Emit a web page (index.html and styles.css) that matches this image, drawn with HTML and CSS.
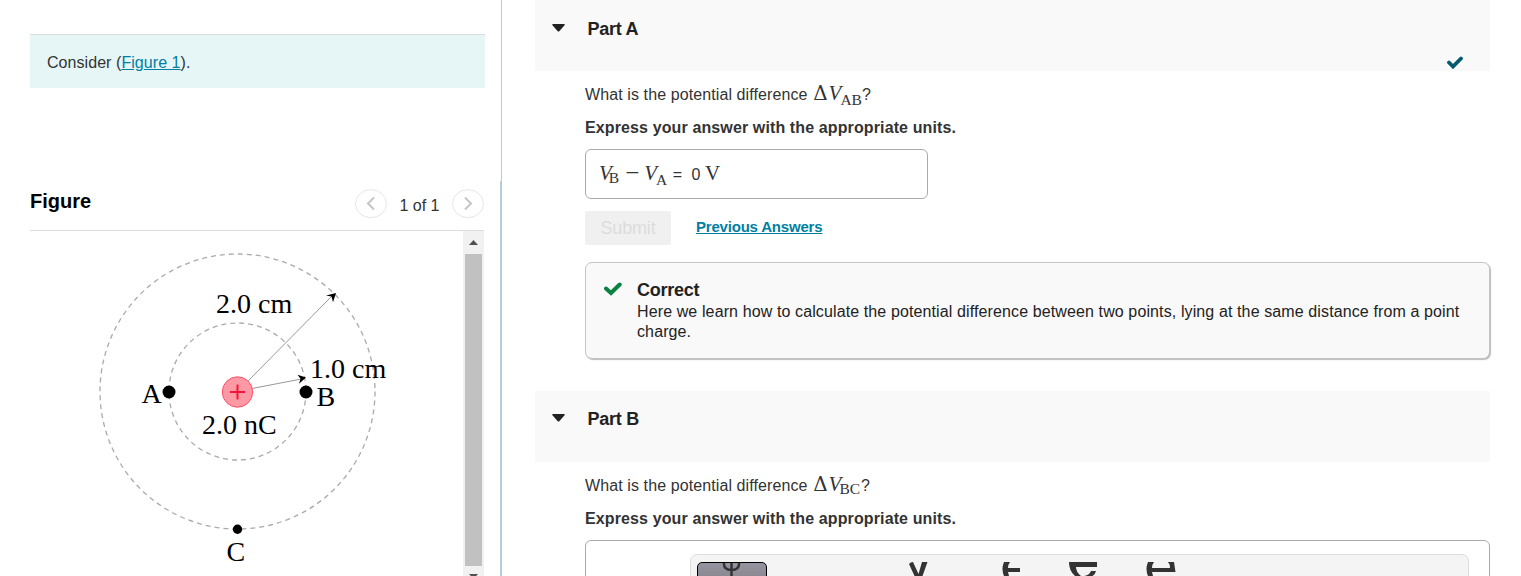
FILE: index.html
```html
<!DOCTYPE html>
<html lang="en">
<head>
  <meta charset="utf-8">
  <meta name="viewport" content="width=device-width" />
  <title>Potential Difference</title>
  <link rel="stylesheet" href="styles.css">
</head>

<body>
  <div class="wrapper">
    <aside class="sidebar">
      <div class="intro">Consider (<a class="link" href="#">Figure 1</a>).</div>

      <div class="figure-panel">
        <header class="figure-header">
          <h2 class="figure-title">Figure</h2>
          <nav class="pager">
            <a class="pager-button" href="#">
              <svg width="32" height="30" viewBox="0 0 32 30"><ellipse cx="16" cy="14.7" rx="15.5" ry="14"/><path d="M19 8.5l-6 6 6 6"/></svg>
            </a>
            <span class="pager-label">1 of 1</span>
            <a class="pager-button" href="#">
              <svg width="32" height="30" viewBox="0 0 32 30"><ellipse cx="16" cy="14.7" rx="15.5" ry="14"/><path d="M13 8.5l6 6-6 6"/></svg>
            </a>
          </nav>
        </header>

        <div class="figure-body">
          <svg class="diagram" width="433" height="345" viewBox="30 231 433 345">
            <!-- equipotential circles -->
            <circle class="orbit" cx="237.5" cy="391.5" r="137.5"/>
            <circle class="orbit" cx="237.5" cy="391.5" r="68.5"/>
            <path class="radius" d="M248 381L334 294M252 388.5L304 378.5"/>
            <path d="M336 293l-10 2.500 5.500 1 1.500 5.800zM306 377.500l-8.500-2.700 3 4-1.500 5z"/>
            <circle class="charge" cx="237.500" cy="392" r="15.200"/>
            <path class="plus" d="M230 392h15M237.500 384.500v15"/>
            <circle cx="169" cy="392" r="6.500"/>
            <circle cx="306" cy="392" r="6.500"/>
            <circle cx="237.500" cy="529.300" r="4.700"/>
            <text x="216" y="313">2.0 cm</text>
            <text x="310" y="377.500">1.0 cm</text>
            <text x="202" y="434">2.0 nC</text>
            <text x="141.500" y="403">A</text>
            <text x="316.500" y="406">B</text>
            <text x="226.500" y="561">C</text>
          </svg>
          <div class="scrollbar">
            <svg class="scroll-arrow" width="21" height="23" viewBox="0 0 21 23"><path d="M6 14l4.500-5 4.500 5z"/></svg>
            <div class="scroll-thumb"></div>
            <svg class="scroll-arrow" width="21" height="10" viewBox="0 0 21 10"><path d="M6 8h9l-4.500 5z"/></svg>
          </div>
        </div>
      </div>
    </aside>

    <div class="divider"></div>

    <main class="main">
      <section class="part">
        <header class="part-header">
          <svg class="caret" width="13" height="8" viewBox="0 0 13 8"><path d="M1 0h11q1.500 0 .5 1.200L7.500 7q-1 1-2 0L.5 1.200Q-.5 0 1 0z"/></svg>
          <h2 class="part-title">Part A</h2>
          <svg class="part-check" width="16" height="13" viewBox="0 0 16 13"><path d="M2 6.500l4 4L14 2.500"/></svg>
        </header>
        <div class="part-body">
          <p class="question">What is the potential difference <span class="math"><span class="delta">Δ</span><i>V</i><sub class="low">AB</sub></span>?</p>
          <p class="instructions">Express your answer with the appropriate units.</p>
          <div class="answer">
            <span class="math"><i>V</i><sub>B</sub><span class="minus">−</span><i>V</i><sub class="low">A</sub></span>
            <span class="equals">=</span>
            <span class="value">0</span>
            <span class="math">V</span>
          </div>
          <div class="actions">
            <span class="button-submit">Submit</span>
            <a class="link previous" href="#">Previous Answers</a>
          </div>
          <div class="feedback">
            <svg class="feedback-check" width="18" height="14" viewBox="0 0 18 14"><path d="M2 6.500l5 4.500L15.700 2.500"/></svg>
            <div class="feedback-text">
              <h3 class="feedback-title">Correct</h3>
              <p>Here we learn how to calculate the potential difference between two points, lying at the same distance from a point<br>charge.</p>
            </div>
          </div>
        </div>
      </section>

      <section class="part part-b">
        <header class="part-header">
          <svg class="caret" width="13" height="8" viewBox="0 0 13 8"><path d="M1 0h11q1.500 0 .5 1.200L7.500 7q-1 1-2 0L.5 1.200Q-.5 0 1 0z"/></svg>
          <h2 class="part-title">Part B</h2>
        </header>
        <div class="part-body">
          <p class="question">What is the potential difference <span class="math"><span class="delta">Δ</span><i>V</i><sub class="wide">BC</sub></span>?</p>
          <p class="instructions">Express your answer with the appropriate units.</p>
          <div class="editor">
            <div class="toolbar">
              <div class="tool-active">
                <svg width="68" height="14" viewBox="0 0 68 14"><path d="M26 0v1q0 6 7.500 6t7.500-6V0M33.500 0v14"/></svg>
              </div>
              <!-- toolbar icons, top edge cut by the panel -->
              <svg class="tools" width="280" height="14" viewBox="900 562 280 14">
                <path d="M909 564q1.500-2 4-2l5.500 12 3.500-12h5.500l-5 14h-8z"/>
                <path d="M1004 562h6q-2 2.500-2 6h12v4h-12l1 4h-5q-3-7 0-14z"/>
                <path d="M1069 562h28v5h-21q0 5 5 9h-6q-6-5-6-14zM1091 571h5q-.5 3-3.500 5h-8q5-1 6.500-5z"/>
                <path d="M1148 562h6q-2 2.500-2 6h18q0-4-2-6h6l1.500 10h-23.500l1 4h-5q-3-7 0-14z"/>
              </svg>
            </div>
          </div>
        </div>
      </section>
    </main>
  </div>
</body>
</html>
```

FILE: styles.css
```css
body {
  margin: 0;
  background-color: white;
  color: #333;
  font-family: "Liberation Sans", Arial, sans-serif;
  font-size: 16px;
  overflow: hidden;
}

p, h2, h3 {
  margin: 0;
}

.wrapper {
  display: flex;
  height: 576px;
  overflow: hidden;
}

.link {
  color: #007fa3;
  text-decoration: underline;
}

/* left column */

.sidebar {
  box-sizing: border-box;
  width: 500px;
  padding: 34px 15px 0 30px;
}

.intro {
  box-sizing: border-box;
  height: 54px;
  padding-left: 17px;
  border-top: 1px solid #dcdcdc;
  background-color: #e6f6f6;
  letter-spacing: .06px;
  line-height: 55px;
}

.figure-panel {
  width: 454px;
  margin-top: 93px;
}

.figure-header {
  box-sizing: border-box;
  display: flex;
  justify-content: space-between;
  height: 50px;
  padding-top: 8px;
  border-bottom: 1px solid #dcdcdc;
}

.figure-title {
  color: black;
  font-size: 20px;
  line-height: 24px;
}

.pager {
  display: flex;
}

.pager-button svg {
  display: block;
  fill: none;
}

.pager-button ellipse {
  stroke: #e6e6e6;
}

.pager-button path {
  stroke: #c4c4c4;
  stroke-width: 2;
}

.pager-label {
  width: 65px;
  line-height: 33px;
  text-align: center;
}

.figure-body {
  display: flex;
  height: 345px;
}

.diagram {
  font-family: "Liberation Serif", "Times New Roman", serif;
  font-size: 28px;
}

.orbit {
  fill: none;
  stroke: #aaa;
  stroke-width: 1.3;
  stroke-dasharray: 5 4;
}

.radius {
  stroke: #999;
}

.charge {
  fill: #ff9aa5;
  stroke: #ff5068;
}

.plus {
  stroke: #f5143c;
  stroke-width: 2;
}

.scrollbar {
  width: 21px;
  background-color: #f1f1f1;
}

.scroll-arrow {
  display: block;
  fill: #505050;
}

.scroll-thumb {
  width: 17px;
  height: 312px;
  margin-left: 2px;
  background-color: #c1c1c1;
}

.divider {
  box-sizing: border-box;
  width: 2px;
  border-right: 1px solid #b8c9dc;
  background: linear-gradient(white 181px, #b8c9dc 181px);
}

/* right column */

.main {
  width: 956px;
  margin-left: 33px;
}

.part {
  margin-bottom: 32px;
}

.part-header {
  box-sizing: border-box;
  display: flex;
  width: 955px;
  height: 71px;
  padding: 19px 27px 0 17px;
  background-color: #f9f9f9;
}

.part-b .part-header {
  padding-top: 18px;
}

.caret {
  margin-top: 5px;
  fill: #222;
}

.part-title {
  flex: 1;
  margin-left: 22.5px;
  color: #222;
  font-size: 18px;
  letter-spacing: -.25px;
  line-height: 20px;
}

.part-check {
  margin-top: 37px;
  fill: none;
  stroke: #005a70;
  stroke-linecap: round;
  stroke-width: 3.8;
}

.part-body {
  padding-left: 50px;
}

.question {
  height: 46px;
  letter-spacing: .1px;
  line-height: 47px;
  white-space: nowrap;
}

.math {
  font-family: "Liberation Serif", "Times New Roman", serif;
  font-size: 21px;
  letter-spacing: 0;
  line-height: 1;
}

.math sub {
  margin-left: -3px;
  font-size: 15.5px;
  line-height: 0;
  vertical-align: -3px;
}

.math .low {
  margin-left: -1px;
  vertical-align: -5px;
}

.math .wide {
  margin-left: -2px;
  margin-right: 1px;
}

.question .math {
  margin-left: 1px;
}

.delta {
  margin-right: 1px;
  font-family: "DejaVu Serif", serif;
  font-size: 20px;
}

.minus {
  margin: 0 5px 0 6px;
  font-size: 25px;
  line-height: 0;
  vertical-align: -1px;
}

.instructions {
  height: 32px;
  font-weight: bold;
  letter-spacing: .12px;
  line-height: 21px;
}

.answer {
  box-sizing: border-box;
  width: 343px;
  height: 50px;
  padding-left: 13px;
  border: 1px solid #aaa;
  border-radius: 6px;
  line-height: 49px;
}

.equals {
  margin: 0 5px 0 1px;
}

.actions {
  display: flex;
  height: 51px;
  padding-top: 12px;
}

.button-submit {
  width: 86px;
  height: 34px;
  margin-right: 25px;
  border-radius: 2px;
  background-color: #f0f0f0;
  color: #dcdcdc;
  font-size: 18px;
  letter-spacing: -.15px;
  line-height: 34px;
  text-align: center;
}

.previous {
  font-size: 15px;
  font-weight: bold;
  letter-spacing: -.2px;
  line-height: 32px;
}

.feedback {
  box-sizing: border-box;
  display: flex;
  width: 905px;
  height: 97px;
  padding: 17px 0 0 18px;
  border: 1px solid #c4c4c4;
  border-radius: 7px;
  background-color: #f9f9f9;
  box-shadow: 1px 1px 1px #bbb;
}

.feedback-check {
  margin-top: 2px;
  fill: none;
  stroke: #0a8043;
  stroke-linecap: round;
  stroke-width: 4;
}

.feedback-text {
  margin-left: 15px;
  color: #222;
  letter-spacing: .115px;
  line-height: 20px;
  white-space: nowrap;
}

.feedback-title {
  height: 22px;
  font-size: 18px;
  letter-spacing: -.25px;
  line-height: 20px;
}

.editor {
  box-sizing: border-box;
  width: 905px;
  height: 120px;
  padding: 13px 20px 0 104px;
  border: 1px solid #aaa;
  border-radius: 6px;
}

.toolbar {
  box-sizing: border-box;
  display: flex;
  height: 80px;
  padding: 7px 6px 0;
  border: 1px solid #ddd;
  border-radius: 7px;
  background-color: #f4f4f4;
}

.tool-active {
  width: 68px;
  height: 40px;
  margin-right: 133px;
  border: 1px solid black;
  border-radius: 5px;
  background: linear-gradient(#9692a0, #777);
}

.tool-active svg {
  display: block;
  fill: none;
  stroke: #333;
  stroke-width: 2.5;
}

.tools {
  fill: #333;
}
```
